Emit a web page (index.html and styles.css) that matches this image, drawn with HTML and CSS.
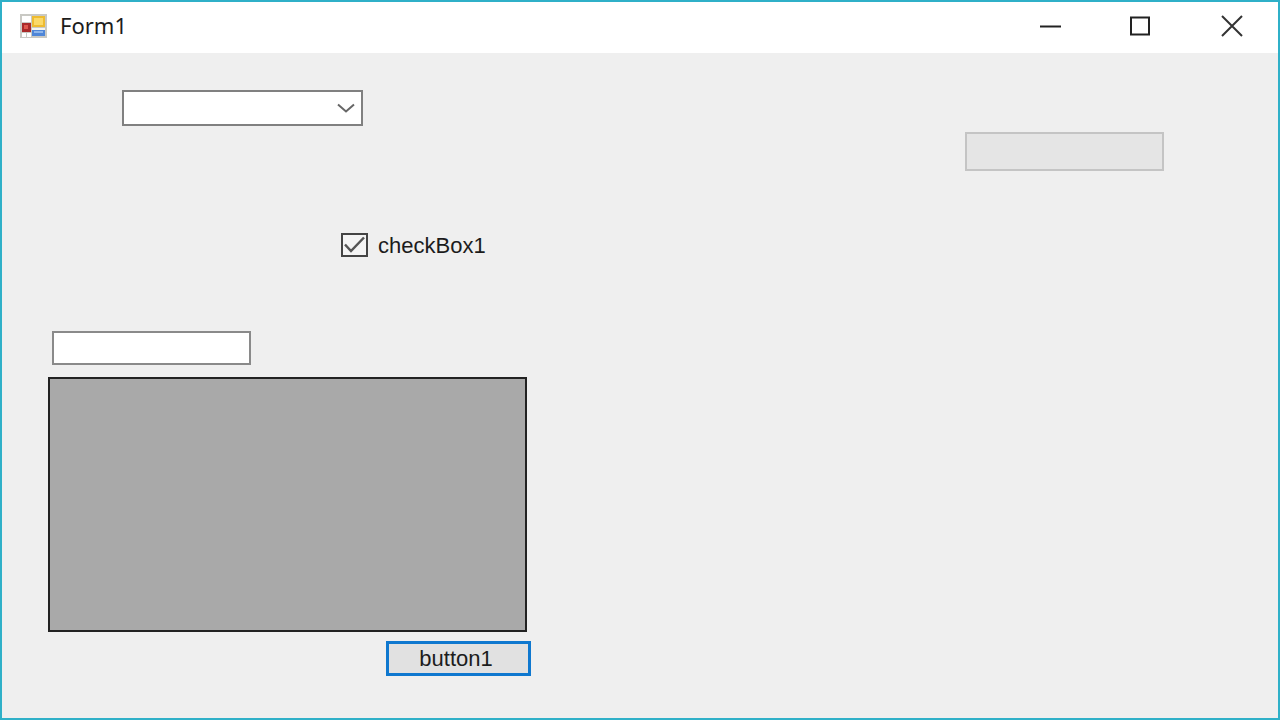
FILE: index.html
```html
<!DOCTYPE html>
<html lang="en">
<head>
<meta charset="utf-8">
<title>Form1</title>
<link rel="stylesheet" href="styles.css">
</head>
<body>
<div class="window">
  <header class="titlebar">
    <svg class="app-icon" viewBox="0 0 27 24" aria-hidden="true">
      <rect x="0" y="0" width="27" height="24" fill="#c9c9c4"/>
      <rect x="2" y="2" width="9" height="6" fill="#fff"/>
      <rect x="2" y="9" width="9" height="9" fill="#a92a2a"/>
      <rect x="4" y="11" width="4" height="4" fill="#e0574c"/>
      <rect x="2" y="19" width="4" height="4" fill="#fff"/>
      <rect x="7" y="19" width="4" height="4" fill="#fff"/>
      <rect x="12" y="2" width="13" height="11" fill="#eebb30"/>
      <rect x="14" y="4" width="9" height="7" fill="#fbd968"/>
      <rect x="12" y="14" width="13" height="2" fill="#f4f4f0"/>
      <rect x="12" y="16" width="13" height="6" fill="#4f86d8"/>
      <rect x="14" y="17" width="9" height="2" fill="#8fb6ea"/>
    </svg>
    <span class="title">Form1</span>
    <div class="caption-buttons">
      <svg class="caption-icon minimize" viewBox="0 0 22 22" aria-hidden="true"><path d="M0 11.5H21" stroke="#222" stroke-width="2" fill="none"/></svg>
      <svg class="caption-icon" viewBox="0 0 22 22" aria-hidden="true"><rect x="2" y="2.5" width="18" height="17" stroke="#222" stroke-width="2" fill="none"/></svg>
      <svg class="caption-icon" viewBox="0 0 22 22" aria-hidden="true"><path d="M1 1L21 21M21 1L1 21" stroke="#333" stroke-width="2" fill="none"/></svg>
    </div>
  </header>
  <main class="client">
    <div class="control combo">
      <svg class="combo-arrow" viewBox="0 0 18 10" aria-hidden="true"><path d="M1 1.5L9 8.5L17 1.5" stroke="#666" stroke-width="2" fill="none"/></svg>
    </div>
    <div class="control disabled-box"></div>
    <label class="control check">
      <span class="check-box">
        <svg viewBox="0 0 23 20" aria-hidden="true"><path d="M2 9.5L8 16L21 2.5" stroke="#555" stroke-width="2.5" fill="none"/></svg>
      </span>
      <span class="check-label">checkBox1</span>
    </label>
    <div class="control textbox"></div>
    <div class="control panel"></div>
    <div class="control button">button1</div>
  </main>
</div>
</body>
</html>
```
FILE: styles.css
```css
* { box-sizing: border-box; }
html, body { margin: 0; height: 100%; }
body { width: 1280px; height: 720px; overflow: hidden; font-family: "Liberation Sans", Arial, sans-serif; color: #1c1c1c; }
.window { width: 1280px; height: 720px; border: 2px solid #2fb0c8; display: flex; flex-direction: column; background: #efefef; }
.titlebar { height: 51px; flex: none; background: #fff; display: flex; align-items: center; padding-left: 18px; }
.app-icon { width: 27px; height: 24px; flex: none; margin-top: -4px; }
.title { margin-left: 13px; font-family: "Noto Sans", "Open Sans", sans-serif; font-size: 22px; margin-top: -6px; }
.caption-buttons { margin-left: auto; display: flex; gap: 70px; padding-right: 35px; margin-top: -4px; }
.caption-icon { width: 22px; height: 22px; display: block; }
.minimize { margin-right: -3px; }
.client { position: relative; flex: 1; }
.control { position: absolute; }
.combo { left: 120px; top: 37px; width: 241px; height: 36px; background: #fff; border: 2px solid #808080; }
.combo-arrow { position: absolute; right: 6px; top: 11px; width: 18px; height: 10px; }
.disabled-box { left: 963px; top: 79px; width: 199px; height: 39px; background: #e5e5e5; border: 2px solid #c4c4c4; }
.check { left: 339px; top: 180px; display: flex; align-items: flex-start; gap: 10px; }
.check-box { width: 27px; height: 24px; border: 2px solid #444; background: #f4f4f4; display: block; }
.check-box svg { width: 23px; height: 20px; display: block; }
.check-label { font-size: 22px; }
.textbox { left: 50px; top: 278px; width: 199px; height: 34px; background: #fff; border: 2px solid #8a8a8a; }
.panel { left: 46px; top: 324px; width: 479px; height: 255px; background: #a9a9a9; border: 2px solid #222; }
.button { left: 384px; top: 588px; width: 145px; height: 35px; background: #e1e1e1; border: 3px solid #0f78cf; display: flex; align-items: center; justify-content: center; font-size: 22px; padding-right: 5px; }
```
